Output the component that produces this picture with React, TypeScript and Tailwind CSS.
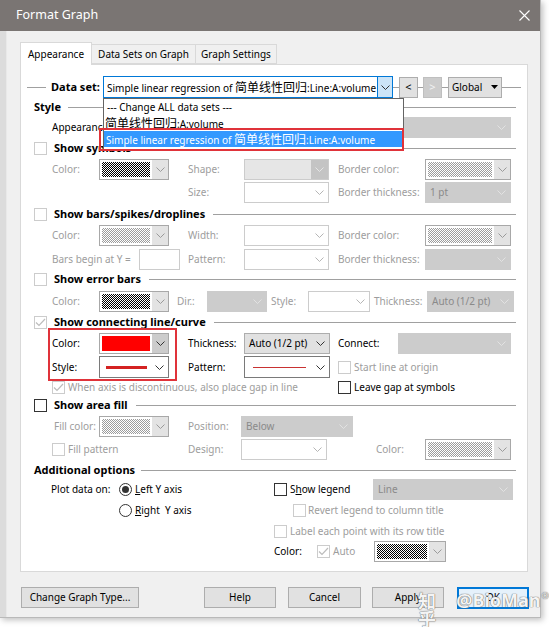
import React from 'react';

const CJK = "font-['Noto_Sans_CJK_SC',sans-serif] text-[12px]";

type Variant = 'white' | 'gray' | 'shape' | 'button' | 'edit';

const comboStyles: Record<Variant, { box: string; arrow: string; chev: string }> = {
  white: { box: 'border-[#cccccc] bg-white text-[#9a9a9a]', arrow: '', chev: '#b5b5b5' },
  gray: { box: 'border-[#cccccc] bg-[#cccccc] text-[#8a8a8a]', arrow: '', chev: '#e2e2e2' },
  shape: { box: 'border-[#cccccc] bg-[#e6e6e6] text-[#8a8a8a]', arrow: 'bg-[#c4c4c4]', chev: '#e6e6e6' },
  button: { box: 'border-[#adadad] bg-[#e1e1e1] text-black', arrow: '', chev: '#333333' },
  edit: { box: 'border-[#7a7a7a] bg-white text-black', arrow: '', chev: '#333333' },
};

const Chevron = ({ color }: { color: string }) => (
  <svg width="9" height="5" viewBox="0 0 9 5" fill="none">
    <polyline points="0.5,0.5 4.5,4.5 8.5,0.5" stroke={color} strokeWidth="1" />
  </svg>
);

function Combo({ cls, variant = 'white', children }: { cls: string; variant?: Variant; children?: React.ReactNode }) {
  const s = comboStyles[variant];
  return (
    <div className={`flex h-[21px] shrink-0 items-center border ${s.box} ${cls}`}>
      <div className="flex min-w-0 flex-1 items-center overflow-hidden whitespace-nowrap px-[4px]">{children}</div>
      <div className={`flex h-full w-[17px] items-center justify-center ${s.arrow}`}>
        <Chevron color={s.chev} />
      </div>
    </div>
  );
}

function ColorBox({ cls, fill, enabled }: { cls: string; fill: 'dark' | 'light' | 'red'; enabled?: boolean }) {
  const fills = {
    dark: 'bg-[image:repeating-conic-gradient(#000_0%_25%,#fff_0%_50%)] bg-[length:2px_2px]',
    light: 'bg-[image:repeating-conic-gradient(#9c9c9c_0%_25%,#fff_0%_50%)] bg-[length:2px_2px]',
    red: 'bg-[#ff0000]',
  };
  return (
    <div className={`flex h-[21px] shrink-0 border border-[#a8a8a8] bg-white ${cls}`}>
      <div className="flex-1 p-[2px]">
        <div className={`h-full w-full ${fills[fill]}`} />
      </div>
      <div className={`flex w-[16px] items-center justify-center ${enabled ? 'bg-[#cccccc]' : 'bg-[#e3e3e3]'}`}>
        <Chevron color={enabled ? '#333333' : '#9a9a9a'} />
      </div>
    </div>
  );
}

function Check({ cls = '', checked, disabled }: { cls?: string; checked?: boolean; disabled?: boolean }) {
  return (
    <div
      className={`flex h-[13px] w-[13px] shrink-0 items-center justify-center border bg-white ${
        disabled ? 'border-[#cccccc]' : 'border-[#333333]'
      } ${cls}`}
    >
      {checked && (
        <svg width="11" height="9" viewBox="0 0 11 9">
          <polyline points="1,4.5 4,7.5 10,1" fill="none" stroke={disabled ? '#bcbcbc' : '#333333'} strokeWidth="1.2" />
        </svg>
      )}
    </div>
  );
}

function Radio({ checked }: { checked?: boolean }) {
  return (
    <div className="flex h-[13px] w-[13px] shrink-0 items-center justify-center rounded-full border border-[#333333] bg-white">
      {checked && <div className="h-[7px] w-[7px] rounded-full bg-[#333333]" />}
    </div>
  );
}

function Header({ h, label, checked, disabled }: { h: string; label: string; checked?: boolean; disabled?: boolean }) {
  return (
    <div className={`flex items-center ${h}`}>
      <Check cls="ml-[13px]" checked={checked} disabled={disabled} />
      <span className="ml-[7px] text-[11px] font-bold text-black">{label}</span>
      <div className="ml-[8px] mr-[11px] h-px flex-1 bg-[#a0a0a0]" />
    </div>
  );
}

const Btn = ({ cls, children }: { cls: string; children: React.ReactNode }) => (
  <div className={`flex h-[21px] items-center justify-center border border-[#adadad] bg-[#e1e1e1] text-black ${cls}`}>
    {children}
  </div>
);

const Dim = 'text-[#9d9d9d]';

export default function App() {
  return (
    <div className="relative h-[627px] w-[549px] overflow-hidden bg-white font-['Noto_Sans','Noto_Sans_CJK_SC',sans-serif] text-[10px] text-black">
      <div className="flex h-[618px] w-[541px] flex-col border-r border-b border-[#b9b9b9] bg-[#f0f0f0] shadow-[2px_2px_6px_rgba(0,0,0,0.25)]">
        {/* Title bar */}
        <div className="flex h-[31px] shrink-0 items-center bg-[#7a7573] text-white">
          <span className="ml-[16px] text-[12.5px]">Format Graph</span>
          <svg className="ml-auto mr-[10px]" width="11" height="11" viewBox="0 0 11 11">
            <path d="M0.5 0.5 L10.5 10.5 M10.5 0.5 L0.5 10.5" stroke="#fff" strokeWidth="1.1" />
          </svg>
        </div>

        <div className="flex flex-1">
          <div className="w-[7px] border-r border-[#e9e9e9] bg-[#dcdcdc]" />
          <div className="flex flex-1 flex-col">
            {/* Tabs */}
            <div className="ml-[13px] mt-[11px] flex h-[22px] items-end">
              <div className="relative z-10 mb-[-1px] flex h-[23px] w-[72px] items-center justify-center border border-b-0 border-[#d9d9d9] bg-white">
                Appearance
              </div>
              <div className="flex h-[20px] w-[104px] items-center justify-center border border-l-0 border-[#d9d9d9]">
                Data Sets on Graph
              </div>
              <div className="flex h-[20px] w-[81px] items-center justify-center border border-l-0 border-[#d9d9d9]">
                Graph Settings
              </div>
            </div>

            {/* Panel */}
            <div className="relative ml-[13px] flex h-[508px] w-[508px] flex-col border border-[#d9d9d9] bg-white">
              {/* Data set */}
              <div className="mt-[11px] flex h-[22px] items-center">
                <div className="ml-[6px] h-px w-[19px] bg-[#a0a0a0]" />
                <span className="ml-[5px] w-[52px] text-[11px] font-bold">Data set:</span>
                <div className="flex h-[22px] w-[290px] border border-[#0078d7] bg-white">
                  <div className="flex flex-1 items-center overflow-hidden whitespace-nowrap pl-[3px]">
                    <span>
                      Simple linear regression of <span className={CJK}>简单线性回归</span>:Line:A:volume
                    </span>
                  </div>
                  <div className="flex w-[15px] items-center justify-center border-l border-[#0078d7] bg-[#cce4f7]">
                    <Chevron color="#333333" />
                  </div>
                </div>
                <div className="h-px w-[6px] bg-[#a0a0a0]" />
                <Btn cls="w-[19px] text-[11px]">&lt;</Btn>
                <div className="h-px w-[5px] bg-[#a0a0a0]" />
                <div className="flex h-[21px] w-[19px] items-center justify-center border border-[#bfbfbf] bg-[#cccccc] text-[11px] text-[#f2f2f2]">
                  &gt;
                </div>
                <div className="h-px w-[6px] bg-[#a0a0a0]" />
                <Btn cls="w-[54px] justify-start pl-[3px]">
                  Global
                  <svg className="ml-[9px]" width="7" height="4" viewBox="0 0 7 4">
                    <path d="M0 0 H7 L3.5 4 Z" fill="#000" />
                  </svg>
                </Btn>
                <div className="mr-[6px] h-px flex-1 bg-[#a0a0a0]" />
              </div>

              {/* Style */}
              <div className="flex h-[18px] items-center">
                <span className="ml-[13px] text-[11px] font-bold">Style</span>
                <div className="ml-[7px] mr-[11px] h-px flex-1 bg-[#a0a0a0]" />
              </div>
              <div className="flex h-[23px] items-center">
                <span className="ml-[31px]">Appearance:</span>
                <Combo cls="ml-auto mr-[16px] w-[393px] h-[20px]" variant="gray" />
              </div>

              {/* Symbols */}
              <Header h="h-[19px]" label="Show symbols" disabled />
              <div className="flex h-[23px] items-center">
                <span className={`ml-[31px] w-[47px] ${Dim}`}>Color:</span>
                <ColorBox cls="w-[70px]" fill="dark" />
                <span className={`ml-[19px] w-[56px] ${Dim}`}>Shape:</span>
                <Combo cls="w-[85px]" variant="shape" />
                <span className={`ml-[9px] w-[87px] ${Dim}`}>Border color:</span>
                <ColorBox cls="w-[86px]" fill="light" />
              </div>
              <div className="flex h-[23px] items-center">
                <span className={`ml-[167px] w-[56px] ${Dim}`}>Size:</span>
                <Combo cls="w-[85px]" />
                <span className={`ml-[9px] w-[87px] ${Dim}`}>Border thickness:</span>
                <Combo cls="w-[86px]" variant="gray">1 pt</Combo>
              </div>

              {/* Bars */}
              <Header h="h-[20px]" label="Show bars/spikes/droplines" disabled />
              <div className="flex h-[23px] items-center">
                <span className={`ml-[31px] w-[47px] ${Dim}`}>Color:</span>
                <ColorBox cls="w-[70px]" fill="light" />
                <span className={`ml-[19px] w-[56px] ${Dim}`}>Width:</span>
                <Combo cls="w-[85px]" />
                <span className={`ml-[9px] w-[87px] ${Dim}`}>Border color:</span>
                <ColorBox cls="w-[86px]" fill="light" />
              </div>
              <div className="flex h-[24px] items-center">
                <span className={`ml-[31px] w-[87px] ${Dim}`}>Bars begin at Y =</span>
                <div className="h-[21px] w-[41px] border border-[#cccccc] bg-white" />
                <span className={`ml-[8px] w-[56px] ${Dim}`}>Pattern:</span>
                <Combo cls="w-[85px]" />
                <span className={`ml-[9px] w-[87px] ${Dim}`}>Border thickness:</span>
                <Combo cls="w-[86px]" variant="gray" />
              </div>

              {/* Error bars */}
              <Header h="h-[17px]" label="Show error bars" disabled />
              <div className="flex h-[26px] items-center">
                <span className={`ml-[31px] w-[47px] ${Dim}`}>Color:</span>
                <ColorBox cls="w-[70px]" fill="dark" />
                <span className={`ml-[8px] w-[30px] ${Dim}`}>Dir.:</span>
                <Combo cls="w-[60px]" variant="gray" />
                <span className={`ml-[4px] w-[37px] ${Dim}`}>Style:</span>
                <Combo cls="w-[62px]" />
                <span className={`ml-[4px] w-[53px] ${Dim}`}>Thickness:</span>
                <Combo cls="w-[87px]" variant="gray">Auto (1/2 pt)</Combo>
              </div>

              {/* Connecting line */}
              <Header h="h-[17px]" label="Show connecting line/curve" checked disabled />
              <div className="flex h-[24px] items-center">
                <span className="ml-[31px] w-[47px]">Color:</span>
                <ColorBox cls="w-[70px]" fill="red" enabled />
                <span className="ml-[19px] w-[56px]">Thickness:</span>
                <Combo cls="w-[86px]" variant="button">Auto (1/2 pt)</Combo>
                <span className="ml-[8px] w-[60px]">Connect:</span>
                <Combo cls="w-[113px]" variant="gray" />
              </div>
              <div className="flex h-[24px] items-center">
                <span className="ml-[31px] w-[47px]">Style:</span>
                <Combo cls="w-[70px] h-[22px]" variant="edit">
                  <div className="ml-[2px] h-[3px] w-[42px] bg-[#d42222]" />
                </Combo>
                <span className="ml-[19px] w-[56px]">Pattern:</span>
                <Combo cls="w-[86px] h-[22px]" variant="edit">
                  <div className="ml-[4px] h-px w-[53px] bg-[#c83232]" />
                </Combo>
                <Check cls="ml-[8px]" disabled />
                <span className={`ml-[3px] ${Dim}`}>Start line at origin</span>
              </div>
              <div className="flex h-[17px] items-center">
                <div className="flex w-[317px] items-center">
                  <Check cls="ml-[31px]" checked disabled />
                  <span className={`ml-[3px] ${Dim}`}>When axis is discontinuous, also place gap in line</span>
                </div>
                <Check />
                <span className="ml-[3px]">Leave gap at symbols</span>
              </div>

              {/* Area fill */}
              <Header h="h-[19px]" label="Show area fill" />
              <div className="flex h-[23px] items-center">
                <span className={`ml-[33px] w-[45px] ${Dim}`}>Fill color:</span>
                <ColorBox cls="w-[70px]" fill="light" />
                <span className={`ml-[19px] w-[53px] ${Dim}`}>Position:</span>
                <Combo cls="w-[112px]" variant="gray">Below</Combo>
              </div>
              <div className="flex h-[23px] items-center">
                <div className="flex w-[167px] items-center">
                  <Check cls="ml-[31px]" disabled />
                  <span className={`ml-[3px] ${Dim}`}>Fill pattern</span>
                </div>
                <span className={`w-[53px] ${Dim}`}>Design:</span>
                <Combo cls="w-[86px]" />
                <span className={`ml-[49px] w-[49px] ${Dim}`}>Color:</span>
                <ColorBox cls="w-[86px]" fill="light" />
              </div>

              {/* Additional options */}
              <div className="flex h-[18px] items-center">
                <span className="ml-[13px] text-[11px] font-bold">Additional options</span>
                <div className="ml-[6px] mr-[11px] h-px flex-1 bg-[#a0a0a0]" />
              </div>
              <div className="flex h-[21px] items-center">
                <div className="flex w-[253px] items-center">
                  <span className="ml-[30px] w-[68px]">Plot data on:</span>
                  <Radio checked />
                  <span className="ml-[3px]">
                    <span className="underline">L</span>eft Y axis
                  </span>
                </div>
                <Check />
                <span className="ml-[3px] w-[83px]">
                  S<span className="underline">h</span>ow legend
                </span>
                <Combo cls="w-[140px] h-[20px]" variant="gray">Line</Combo>
              </div>
              <div className="flex h-[21px] items-center">
                <div className="flex w-[253px] items-center">
                  <div className="ml-[98px]">
                    <Radio />
                  </div>
                  <span className="ml-[3px] whitespace-pre">
                    <span className="underline">R</span>ight  Y axis
                  </span>
                </div>
                <Check cls="ml-[19px]" disabled />
                <span className={`ml-[2px] ${Dim}`}>Revert legend to column title</span>
              </div>
              <div className="flex h-[20px] items-center">
                <Check cls="ml-[253px]" disabled />
                <span className={`ml-[3px] ${Dim}`}>Label each point with its row title</span>
              </div>
              <div className="flex h-[20px] items-center">
                <span className="ml-[253px] w-[43px]">Color:</span>
                <Check checked disabled />
                <span className={`ml-[3px] w-[41px] ${Dim}`}>Auto</span>
                <ColorBox cls="w-[72px] h-[20px]" fill="dark" />
              </div>

              {/* Open drop-down list */}
              <div className="absolute left-[82px] top-[33px] z-20 flex h-[52px] w-[301px] flex-col border border-[#646464] bg-white">
                <div className="flex h-[16px] items-center pl-[3px]">--- Change ALL data sets ---</div>
                <div className="flex h-[16px] items-center pl-[1px]">
                  <span>
                    <span className={CJK}>简单线性回归</span>:A:volume
                  </span>
                </div>
                <div className="flex h-[16px] items-center bg-[#3399ff] pl-[2px] text-white">
                  <span>
                    Simple linear regression of <span className={CJK}>简单线性回归</span>:Line:A:volume
                  </span>
                </div>
              </div>
              <div className="absolute left-[78px] top-[63px] z-30 h-[23px] w-[305px] border-2 border-[#e0333a]" />
              <div className="absolute left-[27px] top-[263px] z-30 h-[53px] w-[129px] border-2 border-[#e0333a]" />
            </div>

            {/* Buttons */}
            <div className="mt-[15px] flex h-[21px] items-center">
              <Btn cls="ml-[14px] w-[118px]">Change Graph Type...</Btn>
              <Btn cls="ml-[65px] w-[72px]">Help</Btn>
              <Btn cls="ml-[12px] w-[73px]">Cancel</Btn>
              <Btn cls="ml-[11px] w-[72px]">Apply</Btn>
              <div className="ml-[13px] flex h-[22px] w-[72px] items-center justify-center border-2 border-[#0078d7] bg-[#e5f1fb]">
                OK
              </div>
            </div>
          </div>
        </div>
      </div>

      {/* Watermark */}
      <div className="absolute left-[418px] top-[591px] z-40 flex items-start text-[18px] leading-none text-[#f4f4f4] [text-shadow:0_0_1px_#666,0_0_1px_#666]">
        <span className="font-['Noto_Sans_CJK_SC',sans-serif] font-bold">知乎</span>
        <span className="ml-[5px] font-bold">@BioMan</span>
        <span className="ml-[1px] text-[9px]">®</span>
      </div>
    </div>
  );
}
